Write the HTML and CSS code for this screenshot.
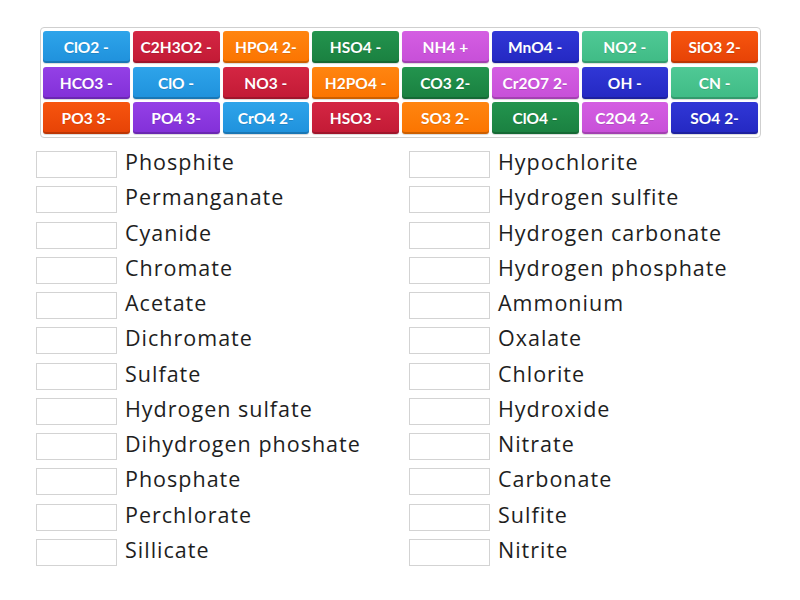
FILE: index.html
```html
<!DOCTYPE html>
<html>
<head>
<meta charset="utf-8">
<link rel="stylesheet" href="styles.css">
</head>
<body>
<div class="panel">
  <div class="tile blue">ClO2 -</div>
  <div class="tile red">C2H3O2 -</div>
  <div class="tile orange">HPO4 2-</div>
  <div class="tile green">HSO4 -</div>
  <div class="tile magenta">NH4 +</div>
  <div class="tile navy">MnO4 -</div>
  <div class="tile mint">NO2 -</div>
  <div class="tile orangered">SiO3 2-</div>

  <div class="tile purple">HCO3 -</div>
  <div class="tile blue">ClO -</div>
  <div class="tile red">NO3 -</div>
  <div class="tile orange">H2PO4 -</div>
  <div class="tile green">CO3 2-</div>
  <div class="tile magenta">Cr2O7 2-</div>
  <div class="tile navy">OH -</div>
  <div class="tile mint">CN -</div>

  <div class="tile orangered">PO3 3-</div>
  <div class="tile purple">PO4 3-</div>
  <div class="tile blue">CrO4 2-</div>
  <div class="tile red">HSO3 -</div>
  <div class="tile orange">SO3 2-</div>
  <div class="tile green">ClO4 -</div>
  <div class="tile magenta">C2O4 2-</div>
  <div class="tile navy">SO4 2-</div>
</div>

<div class="list">
  <div class="col">
    <div class="row"><div class="box"></div><span class="label">Phosphite</span></div>
    <div class="row"><div class="box"></div><span class="label">Permanganate</span></div>
    <div class="row"><div class="box"></div><span class="label">Cyanide</span></div>
    <div class="row"><div class="box"></div><span class="label">Chromate</span></div>
    <div class="row"><div class="box"></div><span class="label">Acetate</span></div>
    <div class="row"><div class="box"></div><span class="label">Dichromate</span></div>
    <div class="row"><div class="box"></div><span class="label">Sulfate</span></div>
    <div class="row"><div class="box"></div><span class="label">Hydrogen sulfate</span></div>
    <div class="row"><div class="box"></div><span class="label">Dihydrogen phoshate</span></div>
    <div class="row"><div class="box"></div><span class="label">Phosphate</span></div>
    <div class="row"><div class="box"></div><span class="label">Perchlorate</span></div>
    <div class="row"><div class="box"></div><span class="label">Sillicate</span></div>
  </div>
  <div class="col">
    <div class="row"><div class="box"></div><span class="label">Hypochlorite</span></div>
    <div class="row"><div class="box"></div><span class="label">Hydrogen sulfite</span></div>
    <div class="row"><div class="box"></div><span class="label">Hydrogen carbonate</span></div>
    <div class="row"><div class="box"></div><span class="label">Hydrogen phosphate</span></div>
    <div class="row"><div class="box"></div><span class="label">Ammonium</span></div>
    <div class="row"><div class="box"></div><span class="label">Oxalate</span></div>
    <div class="row"><div class="box"></div><span class="label">Chlorite</span></div>
    <div class="row"><div class="box"></div><span class="label">Hydroxide</span></div>
    <div class="row"><div class="box"></div><span class="label">Nitrate</span></div>
    <div class="row"><div class="box"></div><span class="label">Carbonate</span></div>
    <div class="row"><div class="box"></div><span class="label">Sulfite</span></div>
    <div class="row"><div class="box"></div><span class="label">Nitrite</span></div>
  </div>
</div>
</body>
</html>
```
FILE: styles.css
```css
html, body {
  margin: 0;
  padding: 0;
  background: #ffffff;
}
body {
  width: 800px;
  height: 600px;
  overflow: hidden;
  font-family: "Lato", "Open Sans", sans-serif;
}
.panel {
  box-sizing: border-box;
  margin: 27px 0 0 40px;
  width: 721px;
  height: 111px;
  border: 1px solid #cfcfcf;
  border-radius: 4px;
  padding: 3px 2px;
  display: grid;
  grid-template-columns: repeat(8, 1fr);
  grid-auto-rows: 32px;
  column-gap: 3px;
  row-gap: 3.5px;
}
.tile {
  border-radius: 3px;
  color: #ffffff;
  font-weight: 700;
  font-size: 15.5px;
  display: flex;
  align-items: center;
  justify-content: center;
  box-shadow: inset 0 -2px 0 rgba(0,0,0,0.18), 0 1px 1px rgba(0,0,0,0.15);
  text-shadow: 0 1px 0 rgba(0,0,0,0.12);
}
.blue { background: linear-gradient(#2ea4ea, #1f91dc); }
.red { background: linear-gradient(#d42643, #c21a35); }
.orange { background: linear-gradient(#ff8510, #fb7400); }
.green { background: linear-gradient(#23944e, #1a8040); }
.magenta { background: linear-gradient(#d45ee2, #c74fd8); }
.navy { background: linear-gradient(#3037d6, #2428c2); }
.mint { background: linear-gradient(#4fc995, #3fbb85); }
.orangered { background: linear-gradient(#f7550e, #e64206); }
.purple { background: linear-gradient(#9440e6, #8230d8); }

.list {
  margin: 13px 0 0 36px;
  display: grid;
  grid-template-columns: 373px 373px;
}
.col {
  display: flex;
  flex-direction: column;
}
.row {
  height: 35.27px;
  display: flex;
  align-items: flex-start;
}
.box {
  box-sizing: border-box;
  width: 81px;
  height: 27px;
  border: 1px solid #d3d3d3;
  background: #ffffff;
  flex: none;
}
.label {
  margin-left: 8px;
  font-family: "Open Sans", sans-serif;
  font-size: 21.5px;
  letter-spacing: 1px;
  line-height: 22px;
  color: #1e1e1e;
  white-space: nowrap;
}
```
